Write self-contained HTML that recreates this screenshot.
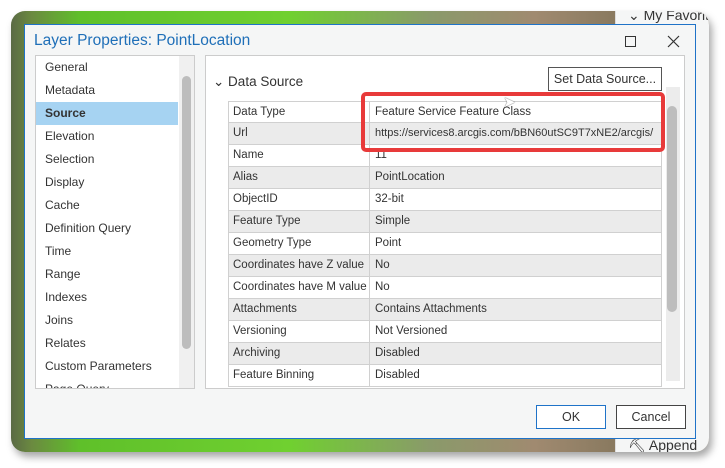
<!DOCTYPE html>
<html><head><meta charset="utf-8"><style>
*{box-sizing:border-box;margin:0;padding:0}
body{width:725px;height:468px;background:#fff;position:relative;overflow:hidden;font-family:"Liberation Sans",sans-serif;font-size:12px;color:#333}
.shot{position:absolute;left:11px;top:11px;width:698px;height:441px;border-radius:14px;overflow:hidden;box-shadow:3px 5px 8px rgba(0,0,0,.35);background:linear-gradient(90deg,#5a6a45 0,#6b8a40 3%,#5fc02a 10%,#70d030 40%,#8a9a6a 60%,#a08a70 75%,#8a7a60 86%)}
.side{position:absolute;left:604px;top:0;width:94px;height:441px;background:#f5f6f6;border-left:1px solid #ddd}
.side div{position:absolute;left:12px;font-size:14px;color:#333;white-space:nowrap}
.dlg{position:absolute;left:24px;top:24px;width:672px;height:415px;background:#f5f6f6;border:1px solid #1f73c8}
.title{position:absolute;left:9px;top:7px;font-size:15.5px;color:#1f6fb8}
.abs{position:absolute}
.list{left:10px;top:30px;width:160px;height:334px;background:#fff;border:1px solid #ccc;overflow:hidden}
.list div{height:23px;line-height:23px;padding-left:9px;font-size:12px}
.list .sel{background:#a6d3f2;font-weight:bold;width:142px}
.panel{left:180px;top:30px;width:480px;height:334px;background:#fff;border:1px solid #ccc;overflow:hidden}
.row{position:absolute;left:22px;width:434px;height:22px;border:1px solid #d0d0d0;border-top:none;line-height:21px;overflow:hidden;font-size:11.5px}
.row span{position:absolute;left:4px;white-space:nowrap}
.row b{font-weight:normal;position:absolute;left:146px;white-space:nowrap}
.row i{position:absolute;left:140px;top:0;bottom:0;border-left:1px solid #d0d0d0;background:inherit;width:300px}
.g{background:#ebebeb}
.btn{position:absolute;height:24px;text-align:center;line-height:22px;font-size:12.5px;background:#fff}
</style></head><body>
<div class="shot">
 <div class="side">
  <div style="top:-4px">⌄ My Favorites</div>
  <div style="top:22px">o P</div>
  <div style="top:80px">in</div>
  <div style="top:133px">n B</div>
  <div style="top:158px">Me</div>
  <div style="top:183px">ron</div>
  <div style="top:208px">Fi</div>
  <div style="top:283px">in</div>
  <div style="top:350px">eor</div>
  <div style="top:376px">ate</div>
  <div style="top:402px">yer</div>
  <div style="top:426px">⛏ Append</div>
 </div>
</div>
<div class="dlg">
 <div class="title">Layer Properties: PointLocation</div>
 <div class="abs" style="left:600px;top:11px;width:11px;height:11px;border:1px solid #333"></div>
 <svg class="abs" style="left:642px;top:10px" width="13" height="13"><path d="M1 1L12 12M12 1L1 12" stroke="#333" stroke-width="1.2"/></svg>
 <div class="abs list">
  <div>General</div><div>Metadata</div><div class="sel">Source</div><div>Elevation</div><div>Selection</div><div>Display</div><div>Cache</div><div>Definition Query</div><div>Time</div><div>Range</div><div>Indexes</div><div>Joins</div><div>Relates</div><div>Custom Parameters</div><div>Page Query</div>
  <div class="abs" style="left:143px;top:0;width:16px;height:332px;background:#f0f0f0"></div>
  <div class="abs" style="left:146px;top:20px;width:9px;height:273px;border-radius:5px;background:#bdbdbd"></div>
 </div>
 <div class="abs panel">
  <div class="abs" style="left:7px;top:18px;font-size:13.5px">⌄ Data Source</div>
  <div class="btn" style="left:342px;top:11px;width:114px;border:1px solid #555">Set Data Source...</div>
  <div class="row" style="top:45px;border-top:1px solid #d0d0d0"><span>Data Type</span><i></i><b>Feature Service Feature Class</b></div>
  <div class="row g" style="top:67px"><span>Url</span><i></i><b style="font-size:11px">https://services8.arcgis.com/bBN60utSC9T7xNE2/arcgis/</b></div>
  <div class="row" style="top:89px"><span>Name</span><i></i><b>11</b></div>
  <div class="row g" style="top:111px"><span>Alias</span><i></i><b>PointLocation</b></div>
  <div class="row" style="top:133px"><span>ObjectID</span><i></i><b>32-bit</b></div>
  <div class="row g" style="top:155px"><span>Feature Type</span><i></i><b>Simple</b></div>
  <div class="row" style="top:177px"><span>Geometry Type</span><i></i><b>Point</b></div>
  <div class="row g" style="top:199px"><span>Coordinates have Z value</span><i></i><b>No</b></div>
  <div class="row" style="top:221px"><span>Coordinates have M value</span><i></i><b>No</b></div>
  <div class="row g" style="top:243px"><span>Attachments</span><i></i><b>Contains Attachments</b></div>
  <div class="row" style="top:265px"><span>Versioning</span><i></i><b>Not Versioned</b></div>
  <div class="row g" style="top:287px"><span>Archiving</span><i></i><b>Disabled</b></div>
  <div class="row" style="top:309px"><span>Feature Binning</span><i></i><b>Disabled</b></div>
  <div class="abs" style="left:460px;top:31px;width:14px;height:294px;background:#ececec"></div>
  <div class="abs" style="left:461px;top:50px;width:10px;height:206px;border-radius:5px;background:#bdbdbd"></div>
  <div class="abs" style="left:155px;top:36px;width:304px;height:60px;border:4px solid #e83a3a;border-radius:5px"></div>
 </div>
 <div class="abs" style="left:478px;top:68px;font-size:15px;color:#fff;text-shadow:0 0 1px #000">➤</div>
 <div class="btn" style="left:511px;top:380px;width:70px;border:1px solid #1f73c8">OK</div>
 <div class="btn" style="left:591px;top:380px;width:70px;border:1px solid #444">Cancel</div>
</div>
</body></html>
